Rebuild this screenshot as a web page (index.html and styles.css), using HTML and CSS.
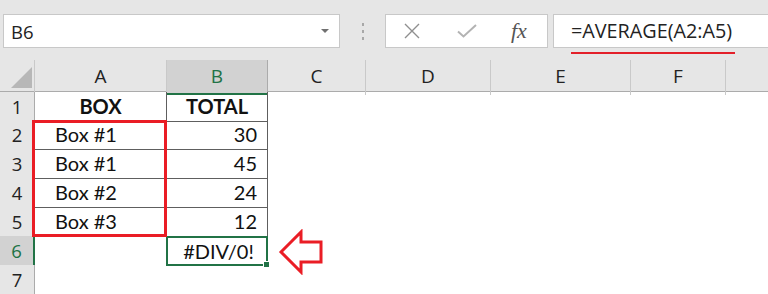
FILE: index.html
```html
<!DOCTYPE html>
<html lang="en">
<head>
    <title>AVERAGE #DIV/0!</title>
    <link rel="stylesheet" href="styles.css">
</head>
<body>
    <div class="formula-bar">
        <div class="name-box">
            <span class="name-text">B6</span>
            <span class="name-drop"></span>
        </div>
        <div class="grip">
            <span class="dot"></span>
            <span class="dot"></span>
            <span class="dot"></span>
        </div>
        <div class="fx-box">
            <svg class="icon-x" width="16" height="16" viewBox="0 0 16 16">
                <path d="M1 1 L15 15 M15 1 L1 15" stroke="#8f8f8f" stroke-width="1.4" fill="none"/>
            </svg>
            <svg class="icon-check" width="20" height="14" viewBox="0 0 20 14">
                <path d="M1 7.5 L6.5 12.5 L19 1" stroke="#b3b3b3" stroke-width="2" fill="none"/>
            </svg>
            <span class="fx">fx</span>
        </div>
        <div class="formula-box">
            <span class="formula-text">=AVERAGE(A2:A5)</span>
        </div>
    </div>

    <div class="sheet">
        <div class="row head-row">
            <div class="corner">
                <svg width="35" height="32" viewBox="0 0 35 32">
                    <polygon points="11,28 32,28 32,7" fill="#b7b7b7"/>
                </svg>
            </div>
            <div class="col-head">A</div>
            <div class="col-head col-active">B</div>
            <div class="col-head">C</div>
            <div class="col-head">D</div>
            <div class="col-head">E</div>
            <div class="col-head">F</div>
            <div class="col-head col-last"></div>
        </div>

        <div class="row">
            <div class="row-head">1</div>
            <div class="cell tb bold center">BOX</div>
            <div class="cell tb bold center">TOTAL</div>
            <div class="cell"></div><div class="cell"></div><div class="cell"></div><div class="cell"></div><div class="cell"></div>
        </div>
        <div class="row">
            <div class="row-head">2</div>
            <div class="cell tb indent">Box #1</div>
            <div class="cell tb right">30</div>
            <div class="cell"></div><div class="cell"></div><div class="cell"></div><div class="cell"></div><div class="cell"></div>
        </div>
        <div class="row">
            <div class="row-head">3</div>
            <div class="cell tb indent">Box #1</div>
            <div class="cell tb right">45</div>
            <div class="cell"></div><div class="cell"></div><div class="cell"></div><div class="cell"></div><div class="cell"></div>
        </div>
        <div class="row">
            <div class="row-head">4</div>
            <div class="cell tb indent">Box #2</div>
            <div class="cell tb right">24</div>
            <div class="cell"></div><div class="cell"></div><div class="cell"></div><div class="cell"></div><div class="cell"></div>
        </div>
        <div class="row">
            <div class="row-head">5</div>
            <div class="cell tb indent">Box #3</div>
            <div class="cell tb right">12</div>
            <div class="cell"></div><div class="cell"></div><div class="cell"></div><div class="cell"></div><div class="cell"></div>
        </div>
        <div class="row">
            <div class="row-head row-active">6</div>
            <div class="cell"></div>
            <div class="cell selected center">#DIV/0!<span class="handle"></span></div>
            <div class="cell"></div><div class="cell"></div><div class="cell"></div><div class="cell"></div><div class="cell"></div>
        </div>
        <div class="row">
            <div class="row-head">7</div>
            <div class="cell"></div><div class="cell"></div><div class="cell"></div><div class="cell"></div><div class="cell"></div><div class="cell"></div><div class="cell"></div>
        </div>

        <!-- annotations drawn over the grid -->
        <div class="red-box"></div>
        <svg class="arrow" width="46" height="46" viewBox="0 0 46 46">
            <polygon points="3,23 23,3 23,13 43,13 43,33 23,33 23,43" fill="#fff" stroke="#ea1d25" stroke-width="3" stroke-linejoin="miter"/>
        </svg>
    </div>
</body>
</html>
```

FILE: styles.css
```css
* {
    margin: 0;
    padding: 0;
    box-sizing: border-box;
}

body {
    width: 768px;
    height: 294px;
    overflow: hidden;
    background: #fff;
    font-family: "Open Sans", sans-serif;
    color: #222;
}

/* formula bar */

.formula-bar {
    height: 60px;
    background: #e6e6e6;
    display: flex;
    align-items: flex-start;
    padding-top: 14px;
}

.name-box {
    margin-left: 3px;
    width: 337px;
    height: 34px;
    background: #fff;
    border: 1px solid #c8c8c8;
    display: flex;
    align-items: center;
    justify-content: space-between;
    padding: 0 10px 0 7px;
}

.name-text {
    font-size: 18.5px;
    color: #222;
}

.name-drop {
    width: 0;
    height: 0;
    border-left: 4px solid transparent;
    border-right: 4px solid transparent;
    border-top: 4px solid #707070;
}

.grip {
    width: 45px;
    height: 34px;
    display: flex;
    flex-direction: column;
    align-items: center;
    justify-content: center;
    gap: 4px;
}

.dot {
    width: 2px;
    height: 3px;
    background: #a8a8a8;
}

.fx-box {
    width: 163px;
    height: 34px;
    background: #fff;
    border: 1px solid #c8c8c8;
    display: flex;
    align-items: center;
    padding-left: 18px;
}

.icon-check {
    margin-left: 37px;
}

.fx {
    margin-left: 34px;
    font-family: "Liberation Serif", serif;
    font-style: italic;
    font-size: 22px;
    color: #555;
    line-height: 1;
}

.formula-box {
    margin-left: 5px;
    flex: 1;
    height: 34px;
    margin-right: -3px;
    background: #fff;
    border: 1px solid #c8c8c8;
    display: flex;
    align-items: center;
    padding-left: 17px;
}

.formula-text {
    font-size: 19.8px;
    color: #222;
    position: relative;
    top: -1px;
}

.formula-text::after {
    content: '';
    position: absolute;
    left: 0;
    right: -3px;
    bottom: -10px;
    height: 2px;
    background: #e3202a;
}

/* sheet */

.sheet {
    position: relative;
}

.row {
    display: grid;
    grid-template-columns: 35px 132px 101px 98px 125px 140px 95px 1fr;
    height: 29px;
}

.head-row {
    height: 32px;
    background: #e6e6e6;
    border-bottom: 1px solid #ababab;
}

.row:nth-child(2) {
    height: 28px;
}

.corner {
    border-right: 1px solid #c9c9c9;
}

.corner svg {
    display: block;
}

.col-head {
    border-right: 1px solid #c9c9c9;
    text-align: center;
    font-size: 19px;
    line-height: 33px;
    color: #222;
}

.col-active {
    background: #d2d2d2;
    color: #217346;
    border-bottom: 2px solid #217346;
    border-right-color: #ababab;
}

.col-last {
    border-right: 0;
}

.row-head {
    background: #e6e6e6;
    border-right: 1px solid #ababab;
    border-bottom: 1px solid #d6d6d6;
    text-align: center;
    font-size: 18.5px;
    line-height: 29px;
    color: #222;
}

.row-active {
    background: #d2d2d2;
    color: #217346;
    border-right: 2px solid #217346;
}

.cell {
    font-family: Lato, "Open Sans", sans-serif;
    font-size: 20px;
    line-height: 29px;
    color: #111;
    white-space: nowrap;
}

.tb {
    border-right: 1px solid #5e5e5e;
    border-bottom: 1px solid #5e5e5e;
}

.bold {
    font-weight: bold;
}

.center {
    text-align: center;
}

.right {
    text-align: right;
    padding-right: 10px;
}

.indent {
    padding-left: 20px;
}

.selected {
    position: relative;
    margin-left: -1px;
    border: 2px solid #217346;
    line-height: 26px;
    padding-left: 3px;
}

.handle {
    position: absolute;
    right: -4px;
    bottom: -4px;
    width: 7px;
    height: 7px;
    background: #217346;
    border: 1px solid #fff;
}

.red-box {
    position: absolute;
    left: 32px;
    top: 60px;
    width: 135px;
    height: 117px;
    border: 3px solid #ea1d25;
}

.arrow {
    position: absolute;
    left: 278px;
    top: 169px;
}
```
